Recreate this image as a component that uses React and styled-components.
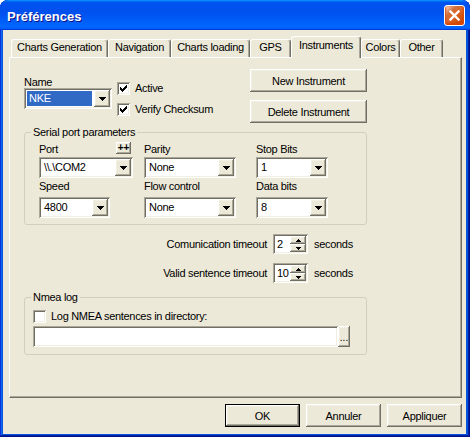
import React from 'react';
import styled, { createGlobalStyle, css } from 'styled-components';

const Global = createGlobalStyle`
  html, body { margin: 0; padding: 0; background: #ffffff; }
  body { font-family: "Liberation Sans", Arial, sans-serif; font-size: 11px; color: #000; letter-spacing: -0.3px; }
  * { box-sizing: border-box; }
`;

const raised = css`
  background: #ece9d8;
  box-shadow: inset -1px -1px #716f64, inset 1px 1px #ffffff, inset -2px -2px #aca899, inset 2px 2px #f1efe2;
`;

const sunken = css`
  background: #ffffff;
  box-shadow: inset 1px 1px #aca899, inset -1px -1px #ffffff, inset 2px 2px #716f64, inset -2px -2px #f1efe2;
`;

const Window = styled.div`
  width: 470px;
  height: 437px;
  display: flex;
  flex-direction: column;
  background: #0855dd;
  border-radius: 8px 8px 0 0;
  overflow: hidden;
  box-shadow: inset -1px -1px #00138c, inset 1px 1px #0831d9, inset -2px -2px #001ea0, inset 2px 2px #166aee;
`;

const TitleBar = styled.div`
  height: 30px;
  flex: none;
  display: flex;
  align-items: center;
  justify-content: space-between;
  padding: 0 5px 0 7px;
  border-radius: 8px 8px 0 0;
  background: linear-gradient(180deg, #0997ff, #0053ee 8%, #0050ee 40%, #06f 88%, #06f 93%, #005bff 95%, #003dd7 96%, #003dd7);
`;

const Title = styled.span`
  font-family: "Liberation Sans", Arial, sans-serif;
  font-weight: bold;
  font-size: 13px;
  letter-spacing: 0;
  line-height: 15px;
  padding-top: 2px;
  color: #ffffff;
  text-shadow: 1px 1px #0f1089;
`;

const CloseButton = styled.div`
  width: 21px;
  height: 21px;
  border: 1px solid #ffffff;
  border-radius: 3px;
  display: flex;
  align-items: center;
  justify-content: center;
  background: radial-gradient(circle at 90% 90%, #cc4600 0%, #dc6527 55%, #cd7546 70%, #ffccb2 90%, #fff 100%);
  box-shadow: inset 0 -1px 2px 1px #da4600;
`;

const Client = styled.div`
  flex: 1;
  margin: 0 4px 3px 3px;
  background: #ece9d8;
  padding: 6px 4px 7px 6px;
  display: flex;
  flex-direction: column;
`;

const TabStrip = styled.div`
  height: 21px;
  display: flex;
  align-items: flex-end;
  padding-left: 2px;
  position: relative;
  z-index: 1;
`;

const Tab = styled.div`
  width: ${p => p.$w}px;
  height: ${p => (p.$active ? 22 : 18)}px;
  margin-bottom: ${p => (p.$active ? -1 : 0)}px;
  background: #ece9d8;
  border-top: 1px solid #ffffff;
  border-left: 1px solid #ffffff;
  border-right: 1px solid #716f64;
  box-shadow: inset -1px 0 #aca899;
  border-radius: 3px 3px 0 0;
  text-align: center;
  line-height: 13px;
  padding-top: ${p => (p.$active ? 2 : 1)}px;
  white-space: nowrap;
  position: relative;
  z-index: ${p => (p.$active ? 2 : 1)};
`;

const Panel = styled.div`
  width: 453px;
  height: 341px;
  flex: none;
  border-top: 1px solid #ffffff;
  border-left: 1px solid #ffffff;
  border-right: 1px solid #716f64;
  border-bottom: 1px solid #716f64;
  box-shadow: inset -1px -1px #aca899;
  padding: 11px 0 0 14px;
`;

const Content = styled.div`
  width: 343px;
  display: flex;
  flex-direction: column;
`;

const TopSection = styled.div`
  display: flex;
  align-items: flex-start;
  height: 54px;
`;

const NameBlock = styled.div`
  margin-top: 8px;
  display: flex;
  flex-direction: column;
`;

const Label = styled.span`
  display: block;
  line-height: ${p => p.$lh || 13}px;
  padding-top: ${p => p.$pt || 0}px;
  white-space: nowrap;
`;

const Combo = styled.div`
  ${sunken};
  width: ${p => p.$w}px;
  height: 21px;
  padding: 2px;
  display: flex;
`;

const ComboText = styled.div`
  flex: 1;
  line-height: ${p => (p.$selected ? 15 : 17)}px;
  margin: ${p => (p.$selected ? '1px 2px 1px 1px' : '0')};
  padding-left: ${p => (p.$selected ? 2 : 3)}px;
  background: ${p => (p.$selected ? '#316ac5' : 'transparent')};
  color: ${p => (p.$selected ? '#ffffff' : '#000000')};
  white-space: nowrap;
  overflow: hidden;
`;

const SmallButton = styled.div`
  ${raised};
  width: ${p => p.$w || 16}px;
  height: ${p => p.$h || 17}px;
  flex: none;
  display: flex;
  align-items: center;
  justify-content: center;
`;

const CheckCol = styled.div`
  margin-left: 5px;
  margin-top: 13px;
  display: flex;
  flex-direction: column;
  gap: 8px;
`;

const CheckRow = styled.label`
  display: flex;
  align-items: center;
  gap: 5px;
  height: 13px;
  line-height: 13px;
  white-space: nowrap;
`;

const CheckBox = styled.span`
  ${sunken};
  width: 13px;
  height: 13px;
  flex: none;
  display: flex;
  align-items: center;
  justify-content: center;
`;

const ButtonCol = styled.div`
  margin-left: auto;
  display: flex;
  flex-direction: column;
  gap: 8px;
`;

const PushButton = styled.button`
  ${raised};
  width: ${p => p.$w}px;
  height: 23px;
  border: none;
  padding: 0;
  font: inherit;
  font-family: "Liberation Sans", Arial, sans-serif;
  font-size: 11px;
  letter-spacing: -0.3px;
  color: #000;
  ${p => p.$default && css`
    box-shadow: inset 0 0 0 1px #000000, inset -2px -2px #716f64, inset 2px 2px #ffffff, inset -3px -3px #aca899, inset 3px 3px #f1efe2;
  `}
`;

const Group = styled.fieldset`
  margin: ${p => p.$mt}px 0 0 0;
  border: 1px solid #d0d0bf;
  border-radius: 3px;
  padding: ${p => p.$pad};
  min-width: 0;
`;

const Legend = styled.legend`
  padding: 0 2px;
  line-height: 13px;
`;

const SerialGrid = styled.div`
  margin-left: 8px;
  display: grid;
  grid-template-columns: 105px 112px 72px;
  grid-template-rows: 15px 21px 19px 21px;
  align-items: start;
`;

const PortHeader = styled.div`
  width: 94px;
  display: flex;
  justify-content: space-between;
  align-items: flex-start;
  padding-right: 2px;
`;

const PlusButton = styled.div`
  ${raised};
  width: 15px;
  height: 12px;
  font-weight: bold;
  font-size: 10px;
  letter-spacing: 0;
  line-height: 11px;
  text-align: center;
`;

const SpinGrid = styled.div`
  margin-top: 9px;
  display: grid;
  grid-template-columns: 243px 35px auto;
  grid-auto-rows: 20px;
  column-gap: 6px;
  row-gap: 9px;
  align-items: center;
`;

const SpinLabel = styled.span`
  justify-self: end;
  line-height: 20px;
  white-space: nowrap;
`;

const Spin = styled.div`
  ${sunken};
  width: 35px;
  height: 20px;
  padding: 2px;
  display: flex;
`;

const SpinText = styled.div`
  flex: 1;
  padding-left: 2px;
  line-height: 16px;
`;

const SpinButtons = styled.div`
  display: flex;
  flex-direction: column;
  width: 16px;
`;

const NmeaBody = styled.div`
  margin-left: 2px;
  display: flex;
  flex-direction: column;
  gap: 3px;
`;

const FieldRow = styled.div`
  display: flex;
`;

const TextField = styled.div`
  ${sunken};
  width: 305px;
  height: 21px;
`;

const DotsButton = styled.div`
  ${raised};
  width: 12px;
  height: 21px;
  line-height: 24px;
  text-align: center;
  letter-spacing: 0;
  font-size: 10px;
`;

const BottomBar = styled.div`
  margin-top: 6px;
  display: flex;
  justify-content: flex-end;
  gap: 6px;
`;

const Arrow = () => (
  <svg width="7" height="4" viewBox="0 0 7 4" shapeRendering="crispEdges">
    <rect x="0" y="0" width="7" height="1" fill="#000" />
    <rect x="1" y="1" width="5" height="1" fill="#000" />
    <rect x="2" y="2" width="3" height="1" fill="#000" />
    <rect x="3" y="3" width="1" height="1" fill="#000" />
  </svg>
);

const SmallArrow = ({ up }) => (
  <svg width="5" height="3" viewBox="0 0 5 3" shapeRendering="crispEdges" style={up ? undefined : { transform: 'rotate(180deg)' }}>
    <rect x="2" y="0" width="1" height="1" fill="#000" />
    <rect x="1" y="1" width="3" height="1" fill="#000" />
    <rect x="0" y="2" width="5" height="1" fill="#000" />
  </svg>
);

const Check = () => (
  <svg width="7" height="7" viewBox="0 0 7 7" shapeRendering="crispEdges">
    <rect x="6" y="0" width="1" height="3" fill="#000" />
    <rect x="5" y="1" width="1" height="3" fill="#000" />
    <rect x="4" y="2" width="1" height="3" fill="#000" />
    <rect x="3" y="3" width="1" height="3" fill="#000" />
    <rect x="2" y="4" width="1" height="3" fill="#000" />
    <rect x="1" y="3" width="1" height="3" fill="#000" />
    <rect x="0" y="2" width="1" height="3" fill="#000" />
  </svg>
);

const CloseX = () => (
  <svg width="11" height="11" viewBox="0 0 11 11">
    <path d="M1.5 1.5 L9.5 9.5 M9.5 1.5 L1.5 9.5" stroke="#fff" strokeWidth="2.4" strokeLinecap="square" />
  </svg>
);

const ComboBox = ({ w, value, selected }) => (
  <Combo $w={w}>
    <ComboText $selected={selected}>{value}</ComboText>
    <SmallButton><Arrow /></SmallButton>
  </Combo>
);

const Checkbox = ({ checked, children }) => (
  <CheckRow>
    <CheckBox>{checked && <Check />}</CheckBox>
    {children}
  </CheckRow>
);

const Spinner = ({ value }) => (
  <Spin>
    <SpinText>{value}</SpinText>
    <SpinButtons>
      <SmallButton $w={16} $h={8}><SmallArrow up /></SmallButton>
      <SmallButton $w={16} $h={8}><SmallArrow /></SmallButton>
    </SpinButtons>
  </Spin>
);

const tabs = [
  { label: 'Charts Generation', w: 97 },
  { label: 'Navigation', w: 63 },
  { label: 'Charts loading', w: 79 },
  { label: 'GPS', w: 41 },
  { label: 'Instruments', w: 70, active: true },
  { label: 'Colors', w: 39 },
  { label: 'Other', w: 43 },
];

export default function App() {
  return (
    <>
      <Global />
      <Window>
        <TitleBar>
          <Title>Préférences</Title>
          <CloseButton><CloseX /></CloseButton>
        </TitleBar>
        <Client>
          <TabStrip>
            {tabs.map(t => (
              <Tab key={t.label} $w={t.w} $active={t.active}>{t.label}</Tab>
            ))}
          </TabStrip>
          <Panel>
            <Content>
              <TopSection>
                <NameBlock>
                  <Label $lh={11}>Name</Label>
                  <ComboBox w={88} value="NKE" selected />
                </NameBlock>
                <CheckCol>
                  <Checkbox checked>Active</Checkbox>
                  <Checkbox checked>Verify Checksum</Checkbox>
                </CheckCol>
                <ButtonCol>
                  <PushButton $w={117}>New Instrument</PushButton>
                  <PushButton $w={117}>Delete Instrument</PushButton>
                </ButtonCol>
              </TopSection>

              <Group $mt={3} $pad="3px 0 6px 6px">
                <Legend>Serial port parameters</Legend>
                <SerialGrid>
                  <PortHeader>
                    <Label $pt={1}>Port</Label>
                    <PlusButton>++</PlusButton>
                  </PortHeader>
                  <Label $pt={1}>Parity</Label>
                  <Label $pt={1}>Stop Bits</Label>
                  <ComboBox w={94} value={'\\\\.\\COM2'} />
                  <ComboBox w={92} value="None" />
                  <ComboBox w={72} value="1" />
                  <Label $pt={2}>Speed</Label>
                  <Label $pt={2}>Flow control</Label>
                  <Label $pt={2}>Data bits</Label>
                  <ComboBox w={71} value="4800" />
                  <ComboBox w={92} value="None" />
                  <ComboBox w={72} value="8" />
                </SerialGrid>
              </Group>

              <SpinGrid>
                <SpinLabel>Comunication timeout</SpinLabel>
                <Spinner value="2" />
                <span>seconds</span>
                <SpinLabel>Valid sentence timeout</SpinLabel>
                <Spinner value="10" />
                <span>seconds</span>
              </SpinGrid>

              <Group $mt={8} $pad="6px 0 7px 6px">
                <Legend>Nmea log</Legend>
                <NmeaBody>
                  <Checkbox>Log NMEA sentences in directory:</Checkbox>
                  <FieldRow>
                    <TextField />
                    <DotsButton>...</DotsButton>
                  </FieldRow>
                </NmeaBody>
              </Group>
            </Content>
          </Panel>
          <BottomBar>
            <PushButton $w={75} $default>OK</PushButton>
            <PushButton $w={75}>Annuler</PushButton>
            <PushButton $w={75}>Appliquer</PushButton>
          </BottomBar>
        </Client>
      </Window>
    </>
  );
}
